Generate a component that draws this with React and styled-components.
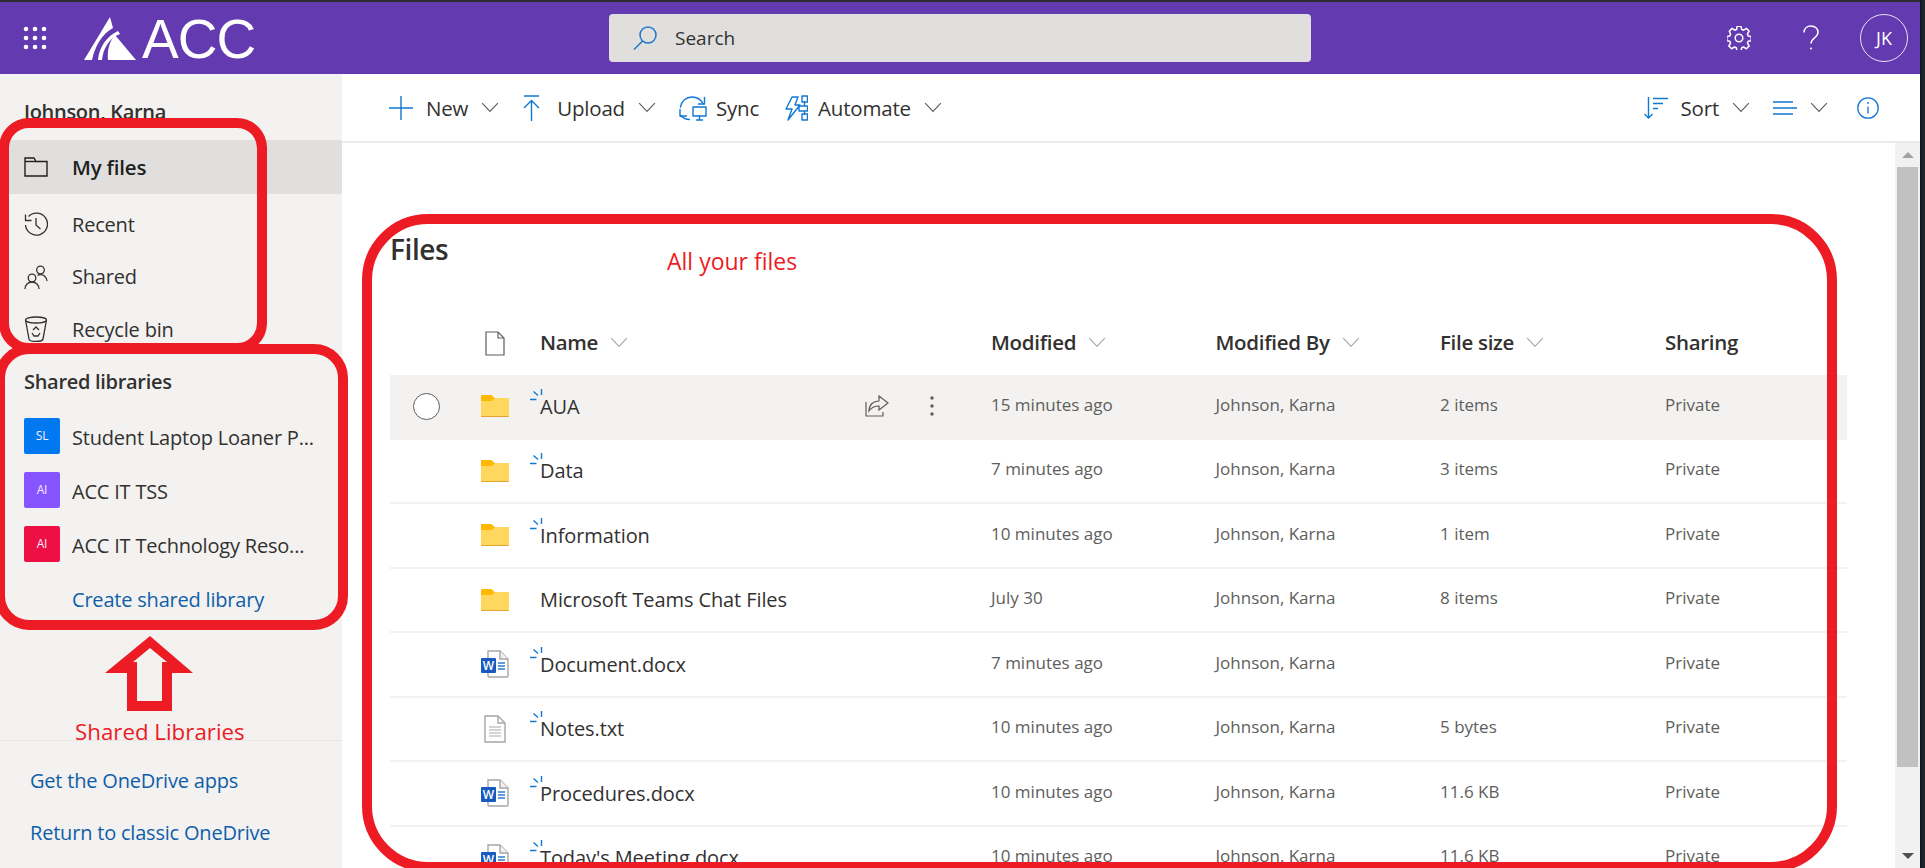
import React from "react";
import styled, { createGlobalStyle } from "styled-components";

const Global = createGlobalStyle`
  html, body { margin: 0; padding: 0; background: #fff; overflow: hidden; }
  body { font-family: "Open Sans", "Noto Sans", sans-serif; color: #323130; }
  * { box-sizing: border-box; }
`;

const Frame = styled.div`
  position: relative; display: flex; width: 1925px; height: 868px; overflow: hidden; background: #fff;
`;
const Screen = styled.div`
  display: flex; flex-direction: column; width: 1920px; height: 868px; flex: none;
  border-top: 2px solid #2d2b30;
`;
const Edge = styled.div`
  width: 5px; flex: none; background: #242424; border-left: 2px solid #0a1c33;
`;
const Header = styled.header`
  display: flex; align-items: center; height: 72px; flex: none; background: #643ab0; color: #fff;
`;
const Brand = styled.div`
  display: flex; align-items: center; width: 609px; flex: none; padding-left: 23px;
`;
const Waffle = styled.svg`
  width: 24px; height: 24px; flex: none; margin-right: 37px;
`;
const LogoMark = styled.svg`
  width: 52px; height: 43px; flex: none; margin-right: 6px;
`;
const LogoWord = styled.span`
  padding-top: 2px; font-family: "Liberation Sans", sans-serif; font-size: 55px; line-height: 44px; letter-spacing: -1px; color: #fff;
`;
const SearchBox = styled.div`
  display: flex; align-items: center; gap: 18px; width: 702px; height: 48px; flex: none;
  padding-left: 24px; border-radius: 4px; background: #e1dfdd; color: #323130; font-size: 19px;
`;
const HeaderTools = styled.div`
  display: flex; align-items: center; flex: 1; justify-content: flex-end; padding-right: 12px;
`;
const GearWrap = styled.span`
  display: flex; margin-right: 52px; color: #fff;
`;
const HelpWrap = styled.span`
  display: flex; margin-right: 41px;
`;
const Avatar = styled.div`
  display: flex; align-items: center; justify-content: center; width: 48px; height: 48px;
  border: 1.5px solid #e8e0f5; border-radius: 50%; font-size: 18px; color: #fff;
`;
const Body = styled.div`
  display: flex; flex: 1; min-height: 0;
`;
const Sidebar = styled.aside`
  display: flex; flex-direction: column; width: 342px; flex: none; background: #f3f2f1;
`;
const UserName = styled.div`
  height: 56px; margin-top: 10px; padding-left: 24px; line-height: 56px; font-size: 20px; font-weight: 600; letter-spacing: -0.3px; color: #323130;
`;
const NavItem = styled.div`
  display: flex; align-items: center; height: ${p => (p.$active ? "54px" : "52.5px")};
  margin-bottom: ${p => (p.$active ? "4px" : "0")};
  padding-left: 24px; gap: 24px; font-size: ${p => (p.$active ? "20.5px" : "20px")}; letter-spacing: -0.2px;
  font-weight: ${p => (p.$active ? 600 : 400)};
  color: ${p => (p.$active ? "#201f1e" : "#323130")};
  background: ${p => (p.$active ? "#e1dfdd" : "transparent")};
`;
const SectionTitle = styled.div`
  height: 49px; margin-top: 4px; padding-left: 24px; line-height: 44px; font-size: 20px; font-weight: 600; letter-spacing: -0.3px; color: #323130;
`;
const LibraryRow = styled.div`
  display: flex; align-items: center; height: 54px; padding-left: 24px; gap: 12px;
  font-size: 20px; letter-spacing: -0.2px; color: #323130;
`;
const LibraryBadge = styled.div`
  display: flex; align-items: center; justify-content: center; width: 36px; height: 36px; flex: none;
  border-radius: 2px; font-size: 12px; color: #f3ecff; background: ${p => p.$color};
`;
const LibraryName = styled.span`
  padding-top: 3px; white-space: nowrap;
`;
const CreateLink = styled.a`
  display: block; height: 54px; padding: 2px 0 0 72px; line-height: 54px; font-size: 20px; letter-spacing: -0.2px; color: #0f5ea8;
`;
const SideFooter = styled.div`
  margin-top: auto; height: 128px; padding-top: 14px; border-top: 1px solid #e9e7e5;
`;
const FooterLink = styled.a`
  display: block; height: 52px; padding-left: 30px; line-height: 52px; font-size: 20px; letter-spacing: -0.2px; color: #0f5ea8;
`;
const Main = styled.main`
  display: flex; flex-direction: column; flex: 1; min-width: 0;
`;
const Toolbar = styled.div`
  display: flex; align-items: center; height: 69px; flex: none; padding: 0 41px 0 47px; gap: 23px;
  border-bottom: 2px solid #edebe9;
`;
const ToolButton = styled.div`
  display: flex; align-items: center; gap: ${p => p.$gap || 13}px; font-size: 20.5px; letter-spacing: -0.2px; color: #323130;
`;
const ToolChevron = styled.span`
  display: flex; margin-left: 3px;
`;
const ToolSpacer = styled.div`
  flex: 1;
`;
const Workspace = styled.div`
  display: flex; flex: 1; min-height: 0;
`;
const Content = styled.div`
  flex: 1; min-width: 0; padding: 86px 48px 0; overflow: hidden;
`;
const PageTitle = styled.h1`
  margin: 0 0 42px; height: 40px; line-height: 40px; font-size: 28px; font-weight: 600; letter-spacing: -0.4px; color: #323130;
`;
const rowColumns = "91px 59px 451px 224.5px 224.5px 225px 1fr";
const HeadRow = styled.div`
  display: grid; grid-template-columns: ${rowColumns}; align-items: center; height: 64px;
`;
const HeadCell = styled.div`
  display: flex; align-items: center; gap: 12px; padding-bottom: 2px; font-size: 20.5px; font-weight: 600; letter-spacing: -0.3px; color: #323130;
`;
const FileRow = styled.div`
  display: grid; grid-template-columns: ${rowColumns}; align-items: center; height: 64.5px;
  border-bottom: 2px solid #f3f2f1; background: ${p => (p.$hover ? "#f3f2f1" : "transparent")};
`;
const RadioCell = styled.div`
  display: flex; padding-left: 23px;
`;
const Radio = styled.div`
  width: 27px; height: 27px; border: 1.5px solid #605e5c; border-radius: 50%; background: #fff;
`;
const IconCell = styled.div`
  display: flex; justify-content: center; width: 28px;
`;
const NameCell = styled.div`
  position: relative; display: flex; align-items: center; font-size: 20px; letter-spacing: -0.1px; color: #323130;
`;
const Spark = styled.svg`
  position: absolute; left: -10px; top: -4px; width: 14px; height: 14px;
`;
const RowActions = styled.div`
  position: absolute; left: 325px; display: flex; align-items: center; gap: 41px;
`;
const MetaCell = styled.div`
  padding-bottom: 4px; font-size: 17px; color: #605e5c; white-space: nowrap;
`;
const Scrollbar = styled.div`
  display: flex; flex-direction: column; align-items: center; width: 25px; flex: none; background: #f1f1f1; padding-top: 9px;
`;
const Thumb = styled.div`
  width: 21px; height: 600px; margin: 9px 0 86px; background: #c1c1c1;
`;
const ArrowUp = styled.div`
  width: 0; height: 0; border: 6px solid transparent; border-top: 0; border-bottom: 6px solid #a3a3a3;
`;
const ArrowDown = styled.div`
  width: 0; height: 0; border: 6px solid transparent; border-bottom: 0; border-top: 6px solid #505050;
`;
const InfoWrap = styled.span`
  display: flex; margin-left: 6px; color: #0f78d4;
`;
const Callout = styled.div`
  position: absolute; left: ${p => p.$x}px; top: ${p => p.$y}px; width: ${p => p.$w}px; height: ${p => p.$h}px;
  border: 10px solid #ed1c24; border-radius: ${p => p.$r}px; pointer-events: none;
`;
const CalloutText = styled.div`
  position: absolute; left: ${p => p.$x}px; top: ${p => p.$y}px; line-height: 30px;
  font-size: ${p => p.$size}px; color: #ed1c24; white-space: nowrap;
`;
const BigArrow = styled.svg`
  position: absolute; left: 100px; top: 630px; width: 100px; height: 85px;
`;

const blue = "#0f78d4";
const Stroke = { fill: "none", stroke: "currentColor", strokeWidth: 1.4, strokeLinecap: "round", strokeLinejoin: "round" };

const Chevron = ({ w = 18, color = "#605e5c" }) => (
  <svg width={w} height={w * 0.6} viewBox="0 0 18 11" fill="none" stroke={color} strokeWidth="1.2"><path d="M1 1.2 9 9.5 17 1.2" /></svg>
);
const Blue = styled.span`
  display: flex; color: ${blue};
`;
const FolderIcon = () => (
  <svg width="28" height="22" viewBox="0 0 28 22">
    <path d="M1 0h9.5l3 3H27a1 1 0 0 1 1 1v17H0V1a1 1 0 0 1 1-1z" fill="#ffb900" />
    <path d="M0 6h11l3-3h13a1 1 0 0 1 1 1v17a1 1 0 0 1-1 1H1a1 1 0 0 1-1-1z" fill="#ffd75e" />
    <path d="M0 21h28v.2a.8.8 0 0 1-.8.8H.8a.8.8 0 0 1-.8-.8z" fill="#e8a22f" />
  </svg>
);
const WordIcon = () => (
  <svg width="28" height="28" viewBox="0 0 28 28">
    <path d="M7 1h12l8 8v17a1 1 0 0 1-1 1H8a1 1 0 0 1-1-1z" fill="#fff" stroke="#a6a6a6" strokeWidth="1.4" />
    <path d="M19 1v8h8" fill="#f2f2f2" stroke="#a6a6a6" strokeWidth="1.4" />
    <path d="M17 13h7M17 16h7M17 19h7" stroke="#2b7cd3" strokeWidth="1.5" />
    <rect x="0" y="8" width="15" height="15" rx="1" fill="#185abd" />
    <text x="7.5" y="20" textAnchor="middle" fontFamily="Open Sans, sans-serif" fontSize="12" fontWeight="600" fill="#fff">W</text>
  </svg>
);
const TextIcon = () => (
  <svg width="22" height="28" viewBox="0 0 22 28" fill="none" stroke="#a6a6a6" strokeWidth="1.4">
    <path d="M1 1h13l7 7v19H1z" fill="#fff" />
    <path d="M14 1v7h7" />
    <path d="M5 12h12M5 15h12M5 18h12M5 21h12" stroke="#c8c6c4" />
  </svg>
);
const PlainDoc = () => (
  <svg width="20" height="25" viewBox="0 0 20 25" fill="none" stroke="#605e5c" strokeWidth="1.2"><path d="M1 1h12l6 6v17H1z" /><path d="M13 1v6h6" /></svg>
);
const SyncSpark = () => (
  <Spark viewBox="0 0 14 14" fill="none" stroke={blue} strokeWidth="1.4"><path d="M11.5 0v6M3.5 2.5 8 6.5M0 10.5h6.5" /></Spark>
);
const ShareIcon = () => (
  <svg width="24" height="22" viewBox="0 0 24 22" fill="none" stroke="#605e5c" strokeWidth="1.2"><path d="M14 1l9 7-9 7v-4c-5 0-8 2-10 5 0-6 4-10 10-10z" /><path d="M1 7v14h17v-4" /></svg>
);
const MoreIcon = () => (
  <svg width="4" height="22" viewBox="0 0 4 22" fill="#605e5c"><circle cx="2" cy="3" r="1.7" /><circle cx="2" cy="11" r="1.7" /><circle cx="2" cy="19" r="1.7" /></svg>
);

const files = [
  { n: "AUA", i: "f", s: 1, m: "15 minutes ago", z: "2 items", hover: 1 },
  { n: "Data", i: "f", s: 1, m: "7 minutes ago", z: "3 items" },
  { n: "Information", i: "f", s: 1, m: "10 minutes ago", z: "1 item" },
  { n: "Microsoft Teams Chat Files", i: "f", s: 0, m: "July 30", z: "8 items" },
  { n: "Document.docx", i: "w", s: 1, m: "7 minutes ago", z: "" },
  { n: "Notes.txt", i: "t", s: 1, m: "10 minutes ago", z: "5 bytes" },
  { n: "Procedures.docx", i: "w", s: 1, m: "10 minutes ago", z: "11.6 KB" },
  { n: "Today's Meeting.docx", i: "w", s: 1, m: "10 minutes ago", z: "11.6 KB" },
];

export default function App() {
  return (
    <>
      <Global />
      <Frame>
        <Screen>
          <Header>
            <Brand>
              <Waffle viewBox="0 0 24 24" fill="#fff">
                {[3, 12, 21].map(y => [3, 12, 21].map(x => <circle key={`${x}-${y}`} cx={x} cy={y} r="2.3" />))}
              </Waffle>
              <LogoMark viewBox="0 0 52 43" fill="#fff">
                <path d="M26 0 0 43h8C11 29 18 17 29 11z" />
                <path d="M14 43h4c1-11 7-22 18-26l-2-3C23 19 15 30 14 43z" />
                <path d="M31 18 52 43H24c-1-9 1-18 7-25z" />
              </LogoMark>
              <LogoWord>ACC</LogoWord>
            </Brand>
            <SearchBox>
              <svg width="24" height="24" viewBox="0 0 24 24" fill="none" stroke="#1f78c8" strokeWidth="1.5"><circle cx="15" cy="9" r="8" /><path d="M9.5 15 1 23.5" /></svg>
              Search
            </SearchBox>
            <HeaderTools>
              <GearWrap>
                <svg width="24" height="24" viewBox="0 1 24 24" fill="none" stroke="#fff" strokeWidth="1.5" strokeLinejoin="round">
                  <circle cx="12" cy="13" r="3.8" />
                  <path d="M10 1.2h4l.7 3.2 1.9.8 2.8-1.8 2.8 2.8-1.8 2.8.8 1.9 3 .7v4l-3 .7-.8 1.9 1.8 2.8-2.8 2.8-2.8-1.8-1.9.8-.7 3h-4l-.7-3-1.9-.8-2.8 1.8-2.8-2.8 1.8-2.8-.8-1.9-3-.7v-4l3-.7.8-1.9L2.3 6.2l2.8-2.8 2.8 1.8 1.9-.8z" />
                </svg>
              </GearWrap>
              <HelpWrap>
                <svg width="16" height="26" viewBox="0 0 16 26" fill="none" stroke="#fff" strokeWidth="1.5"><path d="M1 7.5C1 3.500 4 1 8 1s7 2.600 7 6.300c0 5.200-7 5.700-7 11.200" /><circle cx="8" cy="23.500" r="1" fill="#fff" stroke="none" /></svg>
              </HelpWrap>
              <Avatar>JK</Avatar>
            </HeaderTools>
          </Header>
          <Body>
            <Sidebar>
              <UserName>Johnson, Karna</UserName>
              <NavItem $active>
                <svg width="24" height="20" viewBox="0 0 24 20" fill="none" stroke="#201f1e" strokeWidth="1.4"><path d="M1 1h9l2 3.500h11V19H1z" /><path d="M1 4.500h11" /></svg>
                My files
              </NavItem>
              <NavItem>
                <svg width="24" height="24" viewBox="0 0 24 24" fill="none" stroke="#323130" strokeWidth="1.3"><path d="M4.500 4.500A11 11 0 1 1 1.500 13" /><path d="M1.500 2.500v6h6" /><path d="M12 6v7l4.500 4" /></svg>
                Recent
              </NavItem>
              <NavItem>
                <svg width="24" height="24" viewBox="0 0 24 24" fill="none" stroke="#323130" strokeWidth="1.3"><circle cx="16.500" cy="5" r="3.800" /><circle cx="8" cy="13" r="3.800" /><path d="M1 24c0-4 3-7 7-7s7 3 7 7" /><path d="M13.500 10.500c1-1 5-1.500 7 .5 1.500 1.500 2.500 3 2.500 5" /></svg>
                Shared
              </NavItem>
              <NavItem>
                <svg width="24" height="26" viewBox="0 0 24 26" fill="none" stroke="#323130" strokeWidth="1.3"><ellipse cx="12" cy="4" rx="10.500" ry="3" /><path d="M1.500 4 5 23c.3 1.500 3 2.500 7 2.500s6.700-1 7-2.500L22.500 4" /><path d="M9 14l3-3 3 3M8 17l2 3h4l2-3" /></svg>
                Recycle bin
              </NavItem>
              <SectionTitle>Shared libraries</SectionTitle>
              <LibraryRow><LibraryBadge $color="#0078f0">SL</LibraryBadge><LibraryName>Student Laptop Loaner P...</LibraryName></LibraryRow>
              <LibraryRow><LibraryBadge $color="#8655ff">AI</LibraryBadge><LibraryName>ACC IT TSS</LibraryName></LibraryRow>
              <LibraryRow><LibraryBadge $color="#ee0f45">AI</LibraryBadge><LibraryName>ACC IT Technology Reso...</LibraryName></LibraryRow>
              <CreateLink>Create shared library</CreateLink>
              <SideFooter>
                <FooterLink>Get the OneDrive apps</FooterLink>
                <FooterLink>Return to classic OneDrive</FooterLink>
              </SideFooter>
            </Sidebar>
            <Main>
              <Toolbar>
                <ToolButton>
                  <Blue><svg width="24" height="24" viewBox="0 0 24 24" fill="none" stroke="currentColor" strokeWidth="1.4"><path d="M12 0v24M0 12h24" /></svg></Blue>
                  New <Chevron />
                </ToolButton>
                <ToolButton>
                  <Blue><svg width="22" height="26" viewBox="0 0 22 26" fill="none" stroke="currentColor" strokeWidth="1.4"><path d="M2 1h15M9.500 26V6M2 13l7.500-7.500L17 13" /></svg></Blue>
                  Upload <Chevron />
                </ToolButton>
                <ToolButton $gap={9}>
                  <Blue><svg width="28" height="26" viewBox="0 0 28 26" {...Stroke}><path d="M1.500 12C2.500 6 7 2 13 2c5 0 9 2.500 11.500 7" /><path d="M25.500 2.500V9h-6" /><path d="M1 14.500V21h6.500" /><path d="M1.500 20.500C4 23 7 24.500 10.500 24.500" /><rect x="14" y="12" width="13" height="9" /><path d="M20.500 21v4M17.500 25h6" /></svg></Blue>
                  Sync
                </ToolButton>
                <ToolButton $gap={10}>
                  <Blue><svg width="26" height="26" viewBox="0 0 26 26" {...Stroke}><path d="M10 2h6l-3 8h5L6 25l4-11H4z" /><rect x="20" y="1" width="5.500" height="6" /><rect x="20" y="19" width="5.500" height="6" /><path d="M17 11h8.500v5H17zM22.500 7v4M22.500 16v3" /></svg></Blue>
                  Automate <ToolChevron><Chevron /></ToolChevron>
                </ToolButton>
                <ToolSpacer />
                <ToolButton>
                  <Blue><svg width="24" height="22" viewBox="0 0 24 22" fill="none" stroke="currentColor" strokeWidth="1.4"><path d="M4.500 0v21M.5 17l4 4 4-4M9 1.500h15M9 6.500h10M9 11.500h5" /></svg></Blue>
                  Sort <Chevron />
                </ToolButton>
                <ToolButton>
                  <Blue><svg width="24" height="14" viewBox="0 0 24 14" fill="none" stroke="currentColor" strokeWidth="1.5"><path d="M0 1h20M0 7h24M0 13h20" /></svg></Blue>
                  <Chevron />
                </ToolButton>
                <InfoWrap>
                  <svg width="22" height="22" viewBox="0 0 22 22" fill="none" stroke="currentColor" strokeWidth="1.300"><circle cx="11" cy="11" r="10.200" /><path d="M11 9.500v7" /><circle cx="11" cy="6" r=".9" fill="currentColor" stroke="none" /></svg>
                </InfoWrap>
              </Toolbar>
              <Workspace>
                <Content>
                  <PageTitle>Files</PageTitle>
                  <HeadRow>
                    <div />
                    <IconCell><PlainDoc /></IconCell>
                    <HeadCell>Name <Chevron color="#a6a6a6" /></HeadCell>
                    <HeadCell>Modified <Chevron color="#a6a6a6" /></HeadCell>
                    <HeadCell>Modified By <Chevron color="#a6a6a6" /></HeadCell>
                    <HeadCell>File size <Chevron color="#a6a6a6" /></HeadCell>
                    <HeadCell>Sharing</HeadCell>
                  </HeadRow>
                  {files.map(f => (
                    <FileRow key={f.n} $hover={f.hover}>
                      <RadioCell>{f.hover ? <Radio /> : null}</RadioCell>
                      <IconCell>{f.i === "f" ? <FolderIcon /> : f.i === "w" ? <WordIcon /> : <TextIcon />}</IconCell>
                      <NameCell>
                        {f.s ? <SyncSpark /> : null}
                        {f.n}
                        {f.hover ? <RowActions><ShareIcon /><MoreIcon /></RowActions> : null}
                      </NameCell>
                      <MetaCell>{f.m}</MetaCell>
                      <MetaCell>Johnson, Karna</MetaCell>
                      <MetaCell>{f.z}</MetaCell>
                      <MetaCell>Private</MetaCell>
                    </FileRow>
                  ))}
                </Content>
                <Scrollbar>
                  <ArrowUp />
                  <Thumb />
                  <ArrowDown />
                </Scrollbar>
              </Workspace>
            </Main>
          </Body>
        </Screen>
        <Edge />
        <Callout $x={-1} $y={118} $w={268} $h={235} $r={30} />
        <Callout $x={-5} $y={344} $w={353} $h={286} $r={34} />
        <Callout $x={362} $y={214} $w={1475} $h={658} $r={66} />
        <CalloutText $x={667} $y={246} $size={23}>All your files</CalloutText>
        <CalloutText $x={75} $y={717} $size={22.3}>Shared Libraries</CalloutText>
        <BigArrow viewBox="100 630 100 85">
          <path fillRule="evenodd" fill="#ed1c24" d="M150 636 193 673H172V711H127V673H105ZM150 648 133 662H137V701H162V662H167Z" />
        </BigArrow>
      </Frame>
    </>
  );
}
